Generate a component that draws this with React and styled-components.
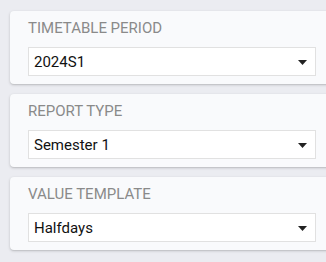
import React from "react";
import styled, { createGlobalStyle } from "styled-components";

const GlobalStyle = createGlobalStyle`
  html, body {
    margin: 0;
    padding: 0;
    background: #ebecf1;
    font-family: Roboto, "Liberation Sans", Arial, sans-serif;
  }
  body {
    overflow: hidden;
  }
`;

const fields = [
  { label: "Timetable Period", value: "2024S1" },
  { label: "Report Type", value: "Semester 1" },
  { label: "Value Template", value: "Halfdays" },
];

export default function App() {
  return (
    <>
      <GlobalStyle />
      <Page>
        {fields.map((f) => (
          <Card key={f.label}>
            <Label>{f.label}</Label>
            <Select>
              <span>{f.value}</span>
              <Caret width="9" height="5" viewBox="0 0 9 5">
                <path d="M0 0 H9 L4.5 5 Z" fill="#222" />
              </Caret>
            </Select>
          </Card>
        ))}
      </Page>
    </>
  );
}

const Page = styled.div`
  width: 326px;
  height: 262px;
  overflow: hidden;
  padding: 11px 0 0 10px;
  box-sizing: border-box;
  display: flex;
  flex-direction: column;
  gap: 10px;
`;

const Card = styled.div`
  width: 324px;
  flex-shrink: 0;
  box-sizing: border-box;
  padding: 9px 18px 8px 18px;
  background: #f9fafc;
  border-radius: 4px;
  box-shadow: 0 1px 3px rgba(0, 0, 0, 0.18), 0 1px 1px rgba(0, 0, 0, 0.06);
  display: flex;
  flex-direction: column;
  gap: 11px;
`;

const Label = styled.div`
  font-size: 15px;
  line-height: 16px;
  color: #8a8a8a;
  text-transform: uppercase;
`;

const Select = styled.div`
  height: 29px;
  box-sizing: border-box;
  background: #fff;
  border: 1px solid #e1e1e1;
  display: flex;
  align-items: center;
  justify-content: space-between;
  padding: 0 8px 0 5px;
  font-size: 15px;
  color: #111;
`;

const Caret = styled.svg`
  display: block;
  margin-top: 1px;
`;
